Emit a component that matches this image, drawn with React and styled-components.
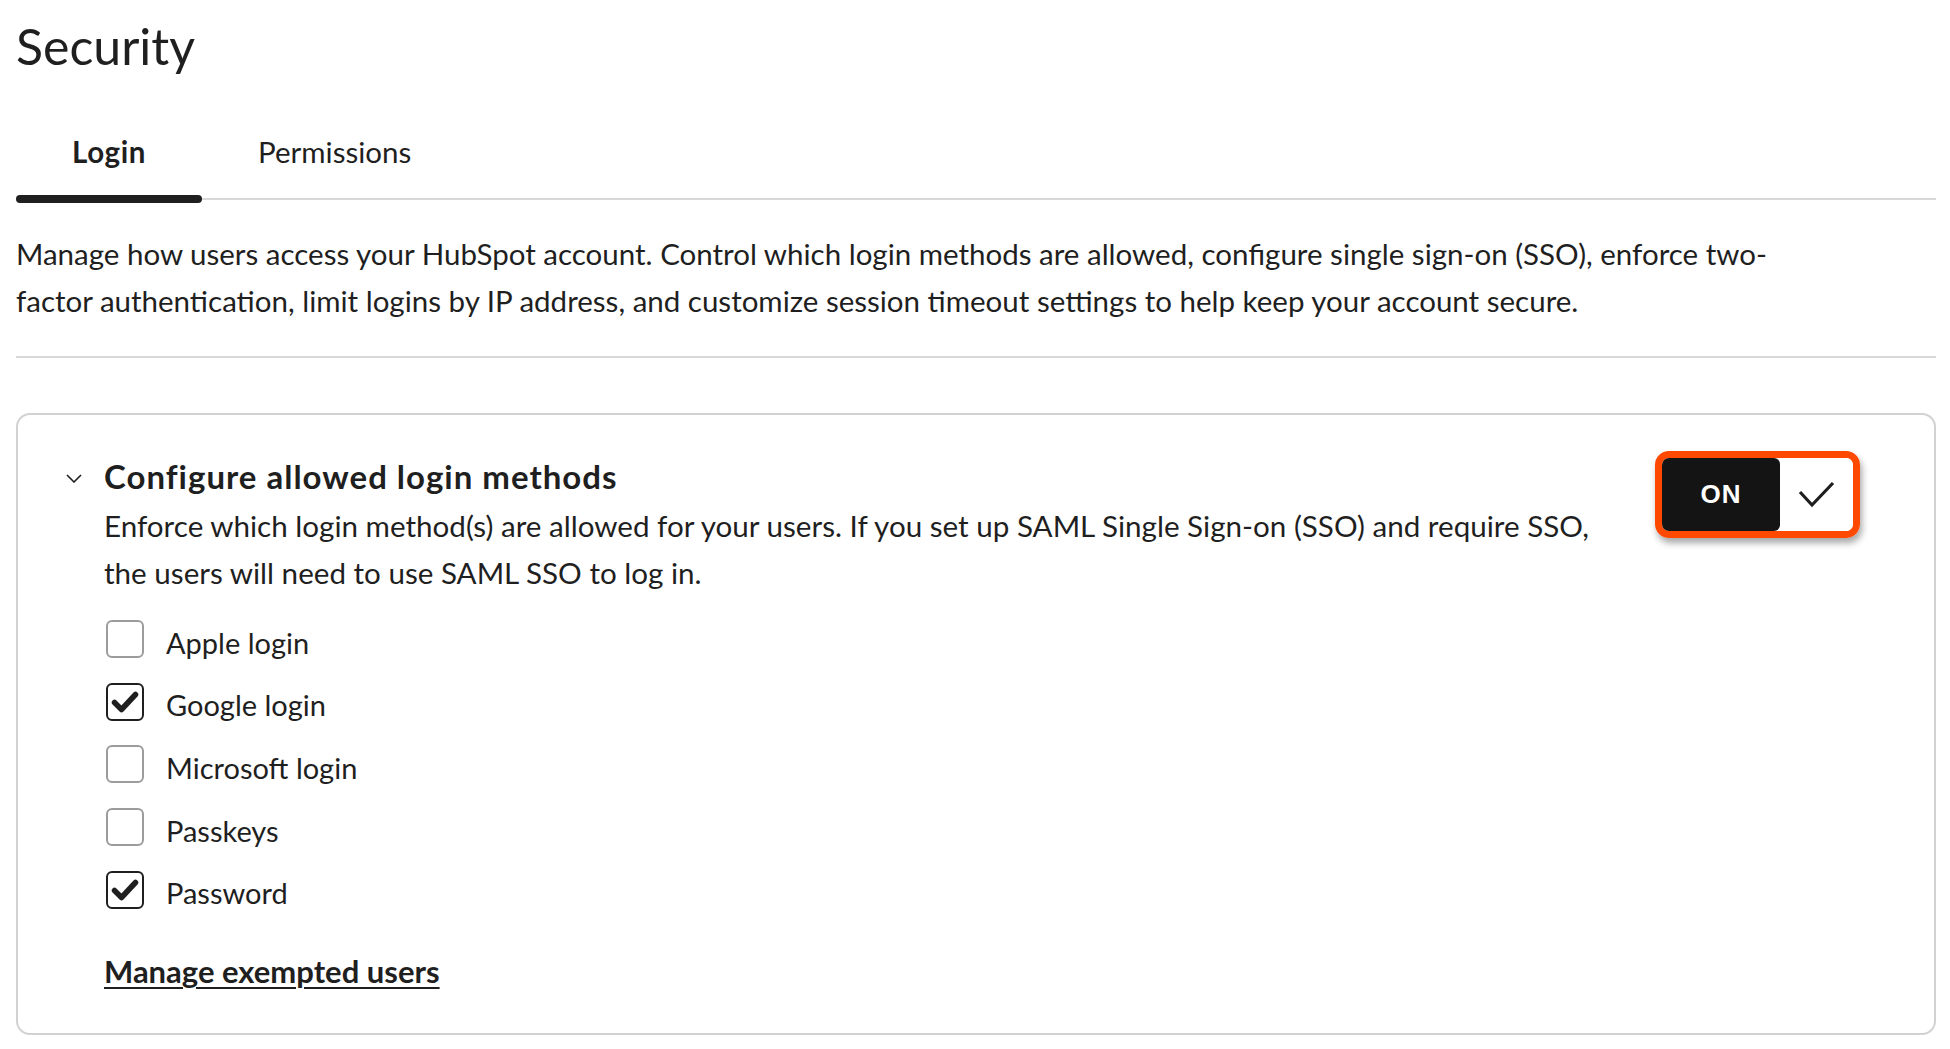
import React from 'react';
import styled, { createGlobalStyle } from 'styled-components';

const GlobalStyle = createGlobalStyle`
  html, body {
    margin: 0;
    padding: 0;
    background: #ffffff;
  }
  body {
    font-family: Lato, "Liberation Sans", sans-serif;
    color: #1f1f1f;
  }
`;

const Page = styled.div`
  padding: 0 14px 0 16px;
`;

const Title = styled.h1`
  margin: 17px 0 0 0;
  font-size: 50px;
  line-height: 58px;
  font-weight: 400;
`;

const TabList = styled.div`
  display: flex;
  margin-top: 40px;
  border-bottom: 2px solid #d8d8d8;
`;

const Tab = styled.div`
  position: relative;
  padding: 20px 56px 29px;
  font-size: 29.5px;
  line-height: 34px;
  font-weight: ${p => (p.$active ? 700 : 400)};
  letter-spacing: ${p => (p.$active ? '0.6px' : '0')};

  &::after {
    content: '';
    display: ${p => (p.$active ? 'block' : 'none')};
    position: absolute;
    left: 0;
    right: 0;
    bottom: -5px;
    height: 8px;
    border-radius: 4px;
    background: #1f1f1f;
  }
`;

const Intro = styled.p`
  margin: 30px 0 0;
  font-size: 29.5px;
  line-height: 47px;
  white-space: nowrap;
`;

const Divider = styled.hr`
  margin: 32px 0 0;
  border: 0;
  height: 2px;
  background: #d8d8d8;
`;

const Card = styled.section`
  display: flex;
  align-items: flex-start;
  margin-top: 55px;
  padding: 36px 74px 42px 46px;
  border: 2px solid #d2d2d2;
  border-radius: 14px;
`;

const Chevron = styled.svg`
  flex: none;
  margin: 23px 22px 0 2px;
`;

const Body = styled.div`
  flex: 1;
  padding-top: 5px;
`;

const Heading = styled.h2`
  margin: 0;
  font-size: 33px;
  line-height: 40px;
  font-weight: 700;
  letter-spacing: 1px;
`;

const Text = styled.p`
  margin: 6px 0 0;
  font-size: 29.6px;
  line-height: 47px;
  white-space: nowrap;
`;

const Options = styled.div`
  margin-top: 12px;
  display: flex;
  flex-direction: column;
`;

const Option = styled.label`
  display: flex;
  align-items: center;
  gap: 22px;
  height: 62.6px;
  padding-left: 2px;
  font-size: 29px;
`;

const OptionText = styled.span`
  padding-top: 6px;
`;

const Box = styled.span`
  flex: none;
  display: flex;
  align-items: center;
  justify-content: center;
  width: 38px;
  height: 38px;
  box-sizing: border-box;
  border: 2px solid ${p => (p.$checked ? '#1f1f1f' : '#9c9c9c')};
  border-radius: 6px;
  background: #fff;
`;

const ExemptLink = styled.a`
  display: inline-block;
  margin-top: 30px;
  font-size: 31px;
  line-height: 40px;
  font-weight: 700;
  color: #1f1f1f;
  text-decoration: underline;
  text-decoration-thickness: 2px;
  text-underline-offset: 4px;
`;

const Toggle = styled.div`
  flex: none;
  display: flex;
  border: 7px solid #ff4800;
  border-radius: 14px;
  overflow: hidden;
  box-shadow: 2px 5px 7px rgba(0, 0, 0, 0.35);
`;

const ToggleLabel = styled.div`
  width: 118px;
  height: 73px;
  display: flex;
  align-items: center;
  justify-content: center;
  background: #141414;
  color: #fff;
  font-family: "Liberation Sans", Arial, sans-serif;
  font-size: 26px;
  font-weight: 700;
  letter-spacing: 1px;
  border-radius: 0 6px 6px 0;
`;

const ToggleKnob = styled.div`
  width: 73px;
  height: 73px;
  display: flex;
  align-items: center;
  justify-content: center;
  background: #fff;
`;

const methods = [
  { label: 'Apple login', checked: false },
  { label: 'Google login', checked: true },
  { label: 'Microsoft login', checked: false },
  { label: 'Passkeys', checked: false },
  { label: 'Password', checked: true },
];

const CheckMark = () => (
  <svg width="28" height="24" viewBox="0 0 28 24">
    <path
      d="M3.5 12.5 L10.5 19.5 L24.5 4.5"
      fill="none"
      stroke="#1f1f1f"
      strokeWidth="5.5"
      strokeLinecap="round"
      strokeLinejoin="round"
    />
  </svg>
);

export default function App() {
  return (
    <Page>
      <GlobalStyle />
      <Title>Security</Title>

      <TabList>
        <Tab $active>Login</Tab>
        <Tab>Permissions</Tab>
      </TabList>

      <Intro>
        Manage how users access your HubSpot account. Control which login methods are allowed, configure single sign-on (SSO), enforce two-
        <br />
        factor authentication, limit logins by IP address, and customize session timeout settings to help keep your account secure.
      </Intro>

      <Divider />

      <Card>
        <Chevron width="16" height="9" viewBox="0 0 16 9">
          <path d="M1 1 L8 8 L15 1" fill="none" stroke="#1f1f1f" strokeWidth="1.6" />
        </Chevron>

        <Body>
          <Heading>Configure allowed login methods</Heading>
          <Text>
            Enforce which login method(s) are allowed for your users. If you set up SAML Single Sign-on (SSO) and require SSO,
            <br />
            the users will need to use SAML SSO to log in.
          </Text>

          <Options>
            {methods.map(m => (
              <Option key={m.label}>
                <Box $checked={m.checked}>{m.checked && <CheckMark />}</Box>
                <OptionText>{m.label}</OptionText>
              </Option>
            ))}
          </Options>

          <ExemptLink href="#">Manage exempted users</ExemptLink>
        </Body>

        <Toggle>
          <ToggleLabel>ON</ToggleLabel>
          <ToggleKnob>
            <svg width="37" height="27" viewBox="0 0 37 27">
              <path
                d="M2 11 L14 24 L35 2"
                fill="none"
                stroke="#1f1f1f"
                strokeWidth="3.2"
              />
            </svg>
          </ToggleKnob>
        </Toggle>
      </Card>
    </Page>
  );
}
